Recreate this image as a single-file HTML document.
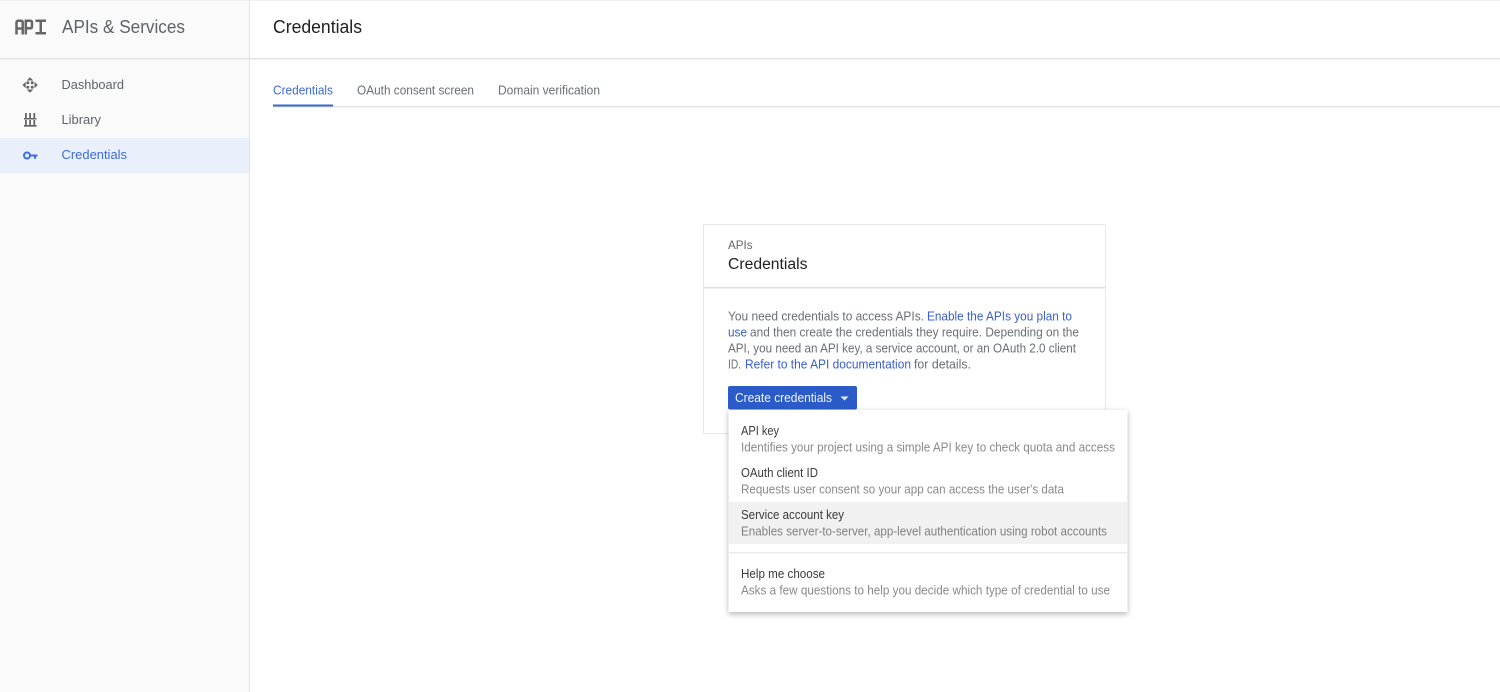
<!DOCTYPE html>
<html><head><meta charset="utf-8"><style>
html,body{margin:0;padding:0;background:#fff;width:1500px;height:692px;overflow:hidden}
svg{display:block;position:absolute;left:0;top:0}
text{font-family:"Liberation Sans",sans-serif}
</style></head><body>
<svg width="1500" height="692" viewBox="0 0 1500 692" xmlns="http://www.w3.org/2000/svg">
<defs><filter id="sh" x="-5%" y="-5%" width="110%" height="112%"><feDropShadow dx="0" dy="2" stdDeviation="3" flood-color="#000" flood-opacity=".3"/></filter></defs>
<rect width="1500" height="692" fill="#fff"/>
<rect width="1500" height="1" fill="#f1f1f1"/>
<rect x="0" y="1" width="249" height="691" fill="#fafafa"/>
<rect x="249" y="0" width="1" height="692" fill="#e3e3e3"/>
<rect x="0" y="58" width="1500" height="1.500" fill="#e3e3e3"/>
<rect x="0" y="138" width="249" height="35" fill="#e9effb"/>

<!-- API logo -->
<g fill="none" stroke="#666" stroke-width="2.500">
<path d="M16.500 34.500V22.500q0-1.800 1.800-1.800h2.600q1.800 0 1.800 1.800V34.500M16.500 28.500h6.200"/>
<path d="M25.800 34.500V20.700h4.400q1.800 0 1.800 1.800v4q0 1.800-1.800 1.800h-4.400"/>
<path d="M35.500 20.700h10.500M40.750 20.700V33.300M35.500 33.300h10.500"/>
</g>
<text x="62" y="33" font-size="18" fill="#5f6368" textLength="123" lengthAdjust="spacingAndGlyphs">APIs &amp; Services</text>
<text x="273" y="33" font-size="18" fill="#212121" textLength="89" lengthAdjust="spacingAndGlyphs">Credentials</text>

<!-- sidebar icons -->
<g fill="#666">
<path d="M30 77.300l3.200 3.200h-6.400zM30 92.700l3.200-3.200h-6.400zM22.500 85l3.200-3.200v6.400zM37.700 85l-3.200-3.200v6.400z"/>
<circle cx="27.800" cy="82.800" r="1.500"/><circle cx="32.200" cy="82.800" r="1.500"/><circle cx="27.800" cy="87.200" r="1.500"/><circle cx="32.200" cy="87.200" r="1.500"/>
<path d="M25 113h1.800v5h-1.800zM29.200 113h1.800v5h-1.800zM33.400 113h1.800v5h-1.800zM25 120h1.800v5h-1.800zM29.200 120h1.800v5h-1.800zM33.400 120h1.800v5h-1.800z"/>
<rect x="24" y="118" width="12.500" height="1.500"/><rect x="24" y="125" width="12.500" height="1.700"/>
</g>
<circle cx="27" cy="155.500" r="3" fill="none" stroke="#3f6fe0" stroke-width="2"/>
<path d="M30 154.500h7.500v2h-1.500v2.200h-2v-2.200H30z" fill="#3f6fe0"/>

<text x="61.500" y="89" font-size="13" fill="#5f6368" textLength="62.500" lengthAdjust="spacingAndGlyphs">Dashboard</text>
<text x="61.500" y="124" font-size="13" fill="#5f6368" textLength="39.500" lengthAdjust="spacingAndGlyphs">Library</text>
<text x="61.500" y="159" font-size="13" fill="#3f6ad8" textLength="65.500" lengthAdjust="spacingAndGlyphs">Credentials</text>

<!-- tabs -->
<text x="273" y="94.500" font-size="12.500" fill="#3f6ad8" textLength="60" lengthAdjust="spacingAndGlyphs">Credentials</text>
<text x="357" y="94.500" font-size="12.500" fill="#6b6f74" textLength="117" lengthAdjust="spacingAndGlyphs">OAuth consent screen</text>
<text x="498" y="94.500" font-size="12.500" fill="#6b6f74" textLength="102" lengthAdjust="spacingAndGlyphs">Domain verification</text>
<rect x="273" y="106" width="1227" height="1.500" fill="#e3e3e3"/>
<rect x="273" y="104.500" width="60" height="2" fill="#3367d6"/>

<!-- card -->
<rect x="703.500" y="224.500" width="402" height="209" fill="#fff" stroke="#e8e8e8"/>
<rect x="704" y="287" width="401" height="1.500" fill="#e0e0e0"/>
<text x="728" y="249" font-size="12" fill="#666" textLength="24.500" lengthAdjust="spacingAndGlyphs">APIs</text>
<text x="728" y="269" font-size="15.500" fill="#212121" textLength="79.500" lengthAdjust="spacingAndGlyphs">Credentials</text>

<g font-size="12.500" fill="#6b6f74">
<text x="728" y="320.300" textLength="196" lengthAdjust="spacingAndGlyphs">You need credentials to access APIs.</text>
<text x="927" y="320.300" fill="#3b5fd0" textLength="145" lengthAdjust="spacingAndGlyphs">Enable the APIs you plan to</text>
<text x="728" y="336.300" fill="#3b5fd0" textLength="19" lengthAdjust="spacingAndGlyphs">use</text>
<text x="750" y="336.300" textLength="329" lengthAdjust="spacingAndGlyphs">and then create the credentials they require. Depending on the</text>
<text x="728" y="352.300" textLength="348" lengthAdjust="spacingAndGlyphs">API, you need an API key, a service account, or an OAuth 2.0 client</text>
<text x="728" y="368.300" textLength="13" lengthAdjust="spacingAndGlyphs">ID.</text>
<text x="745" y="368.300" fill="#3b5fd0" textLength="166" lengthAdjust="spacingAndGlyphs">Refer to the API documentation</text>
<text x="914" y="368.300" textLength="57" lengthAdjust="spacingAndGlyphs">for details.</text>
</g>

<!-- button -->
<rect x="728" y="386" width="129" height="23.500" rx="2" fill="#2a5bc9"/>
<text x="735" y="402" font-size="12.500" fill="#f2f5fc" textLength="97" lengthAdjust="spacingAndGlyphs">Create credentials</text>
<path d="M840.500 396.500h8l-4 4z" fill="#e8eefa"/>

<!-- menu -->
<rect x="728.500" y="410" width="399" height="202" fill="#fff" filter="url(#sh)"/>
<rect x="729" y="502" width="398" height="42" fill="#f1f1f1"/>
<rect x="729" y="552" width="398" height="1.500" fill="#ebebeb"/>
<g font-size="12.500">
<text x="741" y="435" fill="#3a3a3a" textLength="38" lengthAdjust="spacingAndGlyphs">API key</text>
<text x="741" y="451.500" fill="#8a8a8a" textLength="374" lengthAdjust="spacingAndGlyphs">Identifies your project using a simple API key to check quota and access</text>
<text x="741" y="477" fill="#3a3a3a" textLength="77" lengthAdjust="spacingAndGlyphs">OAuth client ID</text>
<text x="741" y="493.500" fill="#8a8a8a" textLength="323" lengthAdjust="spacingAndGlyphs">Requests user consent so your app can access the user's data</text>
<text x="741" y="519" fill="#3a3a3a" textLength="103" lengthAdjust="spacingAndGlyphs">Service account key</text>
<text x="741" y="535.500" fill="#808080" textLength="366" lengthAdjust="spacingAndGlyphs">Enables server-to-server, app-level authentication using robot accounts</text>
<text x="741" y="578" fill="#3a3a3a" textLength="84" lengthAdjust="spacingAndGlyphs">Help me choose</text>
<text x="741" y="594.500" fill="#8a8a8a" textLength="369" lengthAdjust="spacingAndGlyphs">Asks a few questions to help you decide which type of credential to use</text>
</g>
</svg>
</body></html>
